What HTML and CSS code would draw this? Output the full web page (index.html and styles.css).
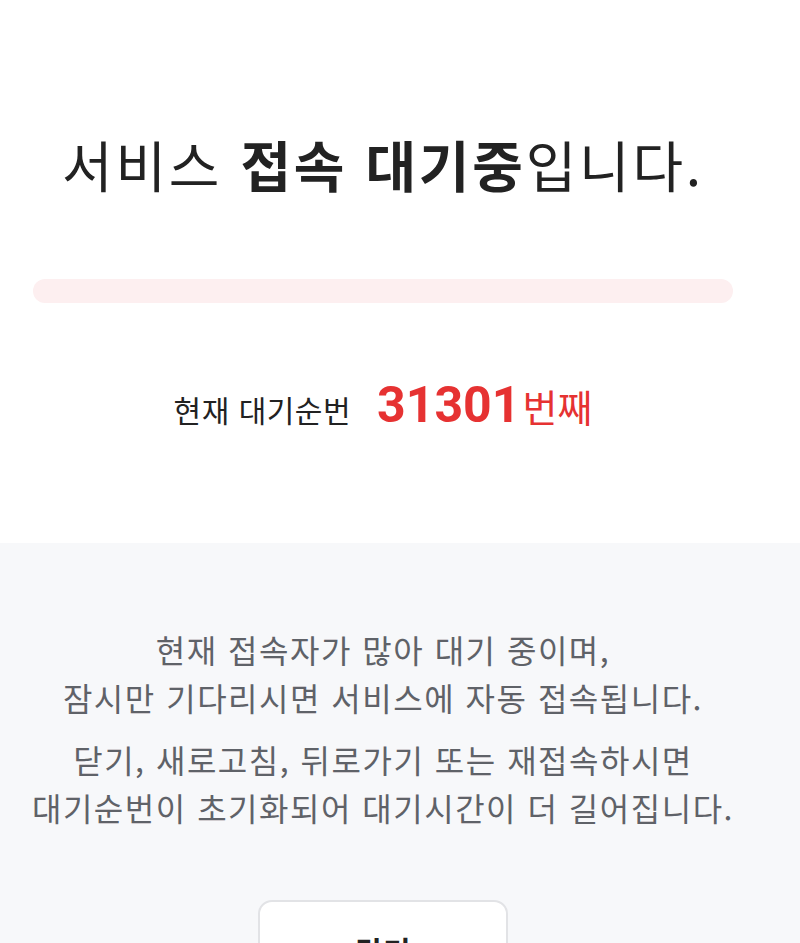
FILE: index.html
```html
<!doctype html>
<html lang="ko">
<head>
	<meta charset="UTF-8">
	<title>서비스 접속 대기중</title>
<link rel="stylesheet" href="styles.css">
</head>
<body>
<div class="wait">
	<div class="top">
		<h1 class="title">서비스 <b>접속 대기중</b>입니다.</h1>
		<div class="bar"><span class="bar-fill"></span></div>
		<p class="order">
			<span class="order-label">현재 대기순번</span>
			<span class="order-num"><b>31301</b>번째</span>
		</p>
	</div>
	<div class="notice">
		<p class="msg">현재 접속자가 많아 대기 중이며,<br>잠시만 기다리시면 서비스에 자동 접속됩니다.</p>
		<p class="msg">닫기, 새로고침, 뒤로가기 또는 재접속하시면<br>대기순번이 초기화되어 대기시간이 더 길어집니다.</p>
		<button class="btn" type="button">닫기</button>
	</div>
</div>
</body>
</html>
```

FILE: styles.css
```css
*{
	margin:0;
	padding:0;
	box-sizing:border-box;
}
body{
	font-family:"Noto Sans CJK KR","Noto Sans",sans-serif;
	color:#222;
	background:#fff;
}
.top,
.notice{
	padding-right:34px;
}
.top{
	padding-top:118px;
	height:543px;
}
.title{
	font-size:55px;
	font-weight:400;
	text-align:center;
	letter-spacing:2.8px;
	line-height:90px;
	color:#222;
}
.title b{
	font-weight:700;
}
.bar{
	margin:71px 33px 0;
	height:24px;
	border-radius:12px;
	background:#fdeff0;
	overflow:hidden;
}
.bar-fill{
	display:block;
	width:0;
	height:100%;
	background:#e63232;
}
.order{
	display:flex;
	justify-content:center;
	align-items:baseline;
	margin-top:72px;
	line-height:60px;
}
.order-label{
	font-size:30px;
	letter-spacing:0.5px;
	color:#222;
	margin-right:26px;
}
.order-num{
	font-size:38px;
	color:#e63232;
}
.order-num b{
	font-family:Roboto,"Noto Sans CJK KR",sans-serif;
	font-size:50px;
	font-weight:700;
	margin-right:2px;
}
.notice{
	background:#f7f8fa;
	padding-top:82px;
	padding-bottom:40px;
	text-align:center;
	min-height:400px;
}
.msg{
	font-size:32px;
	line-height:48px;
	color:#5f6268;
	letter-spacing:1.5px;
}
.msg + .msg{
	margin-top:14px;
}
.btn{
	margin-top:69px;
	width:250px;
	height:100px;
	background:#fff;
	border:2px solid #e2e3e6;
	border-radius:14px;
	font-family:inherit;
	font-size:30px;
	font-weight:700;
	color:#222;
}
```
